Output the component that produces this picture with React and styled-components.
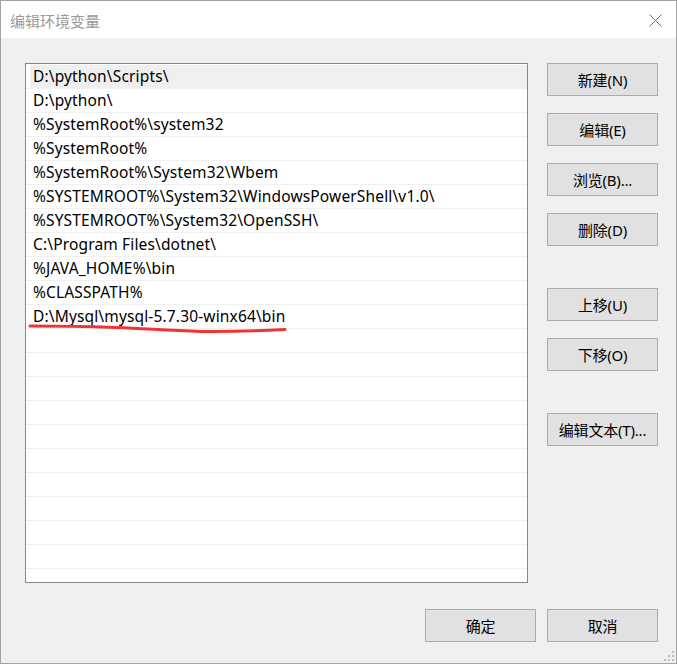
import React from "react";
import styled, { createGlobalStyle } from "styled-components";

const Global = createGlobalStyle`
  html, body { margin: 0; padding: 0; background: #f0f0f0; }
  * { box-sizing: border-box; }
  body { font-family: "Noto Sans", "Noto Sans CJK SC", sans-serif; }
`;

const Window = styled.div`
  position: relative;
  width: 677px;
  height: 664px;
  border: 1px solid #a3a3a3;
  background: #f0f0f0;
  display: flex;
  flex-direction: column;
  overflow: hidden;
`;

const TitleBar = styled.div`
  height: 37px;
  background: #ffffff;
  display: flex;
  align-items: center;
  justify-content: space-between;
  padding: 0 14px 0 9px;
  flex-shrink: 0;
`;

const Title = styled.div`
  font-family: "Noto Sans CJK SC", sans-serif;
  font-size: 15px;
  color: #9a9a9a;
  line-height: 1;
  margin-top: 1px;
`;

const CloseBtn = styled.div`
  width: 14px;
  height: 14px;
  display: flex;
  align-items: center;
  justify-content: center;
  margin-top: 1px;
`;

const Body = styled.div`
  flex: 1;
  display: flex;
  flex-direction: column;
  padding: 25px 18px 0 24px;
`;

const Main = styled.div`
  display: flex;
  gap: 19px;
`;

const ListBox = styled.div`
  width: 503px;
  height: 520px;
  border: 1px solid #828790;
  background: #ffffff;
  padding: 1px 0 0 0;
  overflow: hidden;
  display: flex;
  flex-direction: column;
`;

const Row = styled.div`
  position: relative;
  flex-shrink: 0;
  height: 24px;
  border-bottom: 1px solid #f0f0f0;
  padding-left: 7px;
  font-size: 15.5px;
  letter-spacing: 0.15px;
  line-height: 23px;
  color: #000;
  white-space: nowrap;
  background: ${(p) =>
    p.$selected
      ? "linear-gradient(to right, transparent 4px, #efefef 4px)"
      : "transparent"};
`;

const Underline = styled.svg`
  position: absolute;
  left: 0;
  top: 0;
  overflow: visible;
  pointer-events: none;
`;

const Side = styled.div`
  display: flex;
  flex-direction: column;
  width: 111px;
`;

const Group = styled.div`
  display: flex;
  flex-direction: column;
  gap: 17px;
  margin-bottom: ${(p) => p.$after || 0}px;
`;

const Button = styled.button`
  width: 111px;
  height: 33px;
  border: 1px solid #adadad;
  background: #e1e1e1;
  font-family: "Noto Sans", "Noto Sans CJK SC", sans-serif;
  font-size: 15px;
  color: #000;
  padding: 0;
  display: flex;
  align-items: center;
  justify-content: center;
  letter-spacing: -0.2px;
`;

const Footer = styled.div`
  display: flex;
  justify-content: flex-end;
  gap: 11px;
  margin-top: 26px;
`;

const Grip = styled.svg`
  position: absolute;
  right: 1px;
  bottom: 1px;
`;

const items = [
  "D:\\python\\Scripts\\",
  "D:\\python\\",
  "%SystemRoot%\\system32",
  "%SystemRoot%",
  "%SystemRoot%\\System32\\Wbem",
  "%SYSTEMROOT%\\System32\\WindowsPowerShell\\v1.0\\",
  "%SYSTEMROOT%\\System32\\OpenSSH\\",
  "C:\\Program Files\\dotnet\\",
  "%JAVA_HOME%\\bin",
  "%CLASSPATH%",
  "D:\\Mysql\\mysql-5.7.30-winx64\\bin",
];

const rows = [...items, ...Array(12).fill("")];

export default function App() {
  return (
    <>
      <Global />
      <Window>
        <TitleBar>
          <Title>编辑环境变量</Title>
          <CloseBtn>
            <svg width="13" height="13" viewBox="0 0 13 13">
              <path d="M0.5 0.5 L12.5 12.5 M12.5 0.5 L0.5 12.5" stroke="#707070" strokeWidth="1" fill="none" />
            </svg>
          </CloseBtn>
        </TitleBar>
        <Body>
          <Main>
            <ListBox>
              {rows.map((t, i) => (
                <Row key={i} $selected={i === 0}>
                  {t}
                  {i === 10 && (
                    <Underline width="270" height="12">
                      <path
                        d="M4 21 C 30 21, 60 21.5, 90 22.5 C 120 23.5, 140 25.5, 175 26.5 C 210 27, 240 25.5, 259 24.5"
                        stroke="#f03434"
                        strokeWidth="3"
                        strokeLinecap="round"
                        fill="none"
                      />
                    </Underline>
                  )}
                </Row>
              ))}
            </ListBox>
            <Side>
              <Group $after={42}>
                <Button>新建(N)</Button>
                <Button>编辑(E)</Button>
                <Button>浏览(B)...</Button>
                <Button>删除(D)</Button>
              </Group>
              <Group $after={42}>
                <Button>上移(U)</Button>
                <Button>下移(O)</Button>
              </Group>
              <Group>
                <Button>编辑文本(T)...</Button>
              </Group>
            </Side>
          </Main>
          <Footer>
            <Button>确定</Button>
            <Button>取消</Button>
          </Footer>
        </Body>
        <Grip width="12" height="12" viewBox="0 0 12 12">
          <g fill="#bdbdbd">
            <rect x="9" y="1" width="2" height="2" />
            <rect x="9" y="5" width="2" height="2" />
            <rect x="5" y="5" width="2" height="2" />
            <rect x="9" y="9" width="2" height="2" />
            <rect x="5" y="9" width="2" height="2" />
            <rect x="1" y="9" width="2" height="2" />
          </g>
        </Grip>
      </Window>
    </>
  );
}
